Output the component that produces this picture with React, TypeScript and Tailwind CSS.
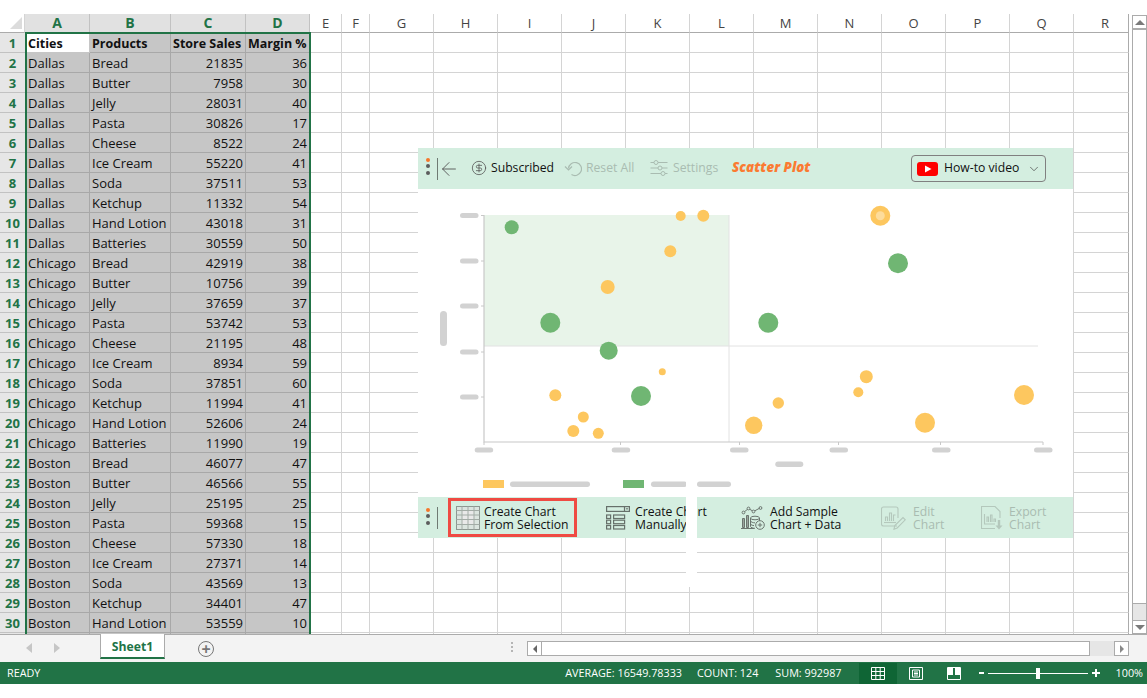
import React from 'react';
import { ArrowLeft, CircleDollarSign, ChevronDown } from 'lucide-react';

const COLUMNS = ['A', 'B', 'C', 'D', 'E', 'F', 'G', 'H', 'I', 'J', 'K', 'L', 'M', 'N', 'O', 'P', 'Q', 'R'];

const RAW = `Dallas,Bread,21835,36
Dallas,Butter,7958,30
Dallas,Jelly,28031,40
Dallas,Pasta,30826,17
Dallas,Cheese,8522,24
Dallas,Ice Cream,55220,41
Dallas,Soda,37511,53
Dallas,Ketchup,11332,54
Dallas,Hand Lotion,43018,31
Dallas,Batteries,30559,50
Chicago,Bread,42919,38
Chicago,Butter,10756,39
Chicago,Jelly,37659,37
Chicago,Pasta,53742,53
Chicago,Cheese,21195,48
Chicago,Ice Cream,8934,59
Chicago,Soda,37851,60
Chicago,Ketchup,11994,41
Chicago,Hand Lotion,52606,24
Chicago,Batteries,11990,19
Boston,Bread,46077,47
Boston,Butter,46566,55
Boston,Jelly,25195,25
Boston,Pasta,59368,15
Boston,Cheese,57330,18
Boston,Ice Cream,27371,14
Boston,Soda,43569,13
Boston,Ketchup,34401,47
Boston,Hand Lotion,53559,10`;

const ROWS = [['Cities', 'Products', 'Store Sales', 'Margin %'], ...RAW.split('\n').map((l) => l.split(',')), ['', '', '', '']];

const YELLOW = '#fdc75f';
const GREEN = '#70b673';

const BUBBLES: [number, number, number, string][] = [
  [680.7, 216, 5, YELLOW],
  [703.3, 215.7, 6, YELLOW],
  [670.3, 251.3, 6, YELLOW],
  [607.7, 287, 7, YELLOW],
  [662.3, 371.7, 3.5, YELLOW],
  [555.3, 395.3, 6, YELLOW],
  [583.3, 417, 5.5, YELLOW],
  [573.3, 431, 6, YELLOW],
  [598.3, 433.3, 5.5, YELLOW],
  [866.3, 376.7, 6.5, YELLOW],
  [858.3, 392.3, 5, YELLOW],
  [778.3, 403, 5.7, YELLOW],
  [753.7, 425.3, 8.7, YELLOW],
  [925, 422.7, 10, YELLOW],
  [1024, 395, 10, YELLOW],
  [880.3, 215.7, 10, YELLOW],
  [511.7, 227.3, 7, GREEN],
  [550.3, 322.7, 10, GREEN],
  [608.7, 350.7, 9, GREEN],
  [641, 396, 10, GREEN],
  [898, 263.3, 10, GREEN],
  [768.3, 322.7, 10, GREEN],
];

const Chart = () => (
  <svg className="block" width={655} height={308} viewBox="418 189 655 308">
    <rect x={484} y={215} width={245} height={131} fill="#e8f4e9" />
    <path d="M484 346H1038M729 215V442" stroke="#e2e2e2" strokeWidth={1} fill="none" />
    <path d="M484 215V442H1043" stroke="#c8c8c8" strokeWidth={1.2} fill="none" />
    <path d="M484 442v3M620.5 442v3M739.5 442v3M838.5 442v3M940.5 442v3M1043 442v3M481 215.5h3M481 261h3M481 306h3M481 352h3M481 397h3" stroke="#c8c8c8" strokeWidth={1} fill="none" />
    {[215.5, 261, 306, 352, 397].map((y) => (
      <rect key={y} x={460} y={y - 2.5} width={18.5} height={5} rx={2.5} fill="#d2d2d2" />
    ))}
    <rect x={440} y={311} width={7} height={35} rx={3.5} fill="#d2d2d2" />
    {[474.7, 611.7, 730, 829.5, 932, 1034].map((x) => (
      <rect key={x} x={x} y={447.5} width={18.5} height={5} rx={2.5} fill="#d2d2d2" />
    ))}
    <rect x={775.3} y={461.5} width={28} height={5.5} rx={2.7} fill="#d2d2d2" />
    <rect x={483} y={480} width={21} height={8} fill={YELLOW} />
    <rect x={510} y={481.5} width={80} height={5.5} rx={2.7} fill="#d2d2d2" />
    <rect x={623} y={480} width={21} height={8} fill={GREEN} />
    <rect x={651} y={481.5} width={36} height={5.5} rx={2.7} fill="#d2d2d2" />
    <rect x={697} y={481.5} width={34} height={5.5} rx={2.7} fill="#d2d2d2" />
    {BUBBLES.map(([x, y, r, c]) => (
      <circle key={`${x}-${y}`} cx={x} cy={y} r={r} fill={c} />
    ))}
    <circle cx={880.3} cy={215.7} r={4.5} fill="#fddc9b" />
  </svg>
);

const Dots = ({ lift }: { lift: string }) => (
  <div className={`flex flex-col gap-[2.5px] ml-[8px] w-[4px] shrink-0 ${lift}`}>
    <div className="w-[4px] h-[4px] rounded-full bg-[#f5762a]" />
    <div className="w-[4px] h-[4px] rounded-full bg-[#5c5c5c]" />
    <div className="w-[4px] h-[4px] rounded-full bg-[#5c5c5c]" />
  </div>
);

const Separator = () => <div className="w-px h-[22px] bg-[#6f7a73] ml-[7px] shrink-0" />;

const ResetIcon = () => (
  <svg width={18} height={18} viewBox="0 0 18 18" fill="none" stroke="#a9bcb1" strokeWidth={1.2}>
    <path d="M4.5 9.5a6.5 6.5 0 1 1 3 6" />
    <path d="M1 7.5L4.5 11L8 7.5" />
  </svg>
);

const SettingsIcon = () => (
  <svg width={18} height={16} viewBox="0 0 18 16" fill="none" stroke="#a9bcb1" strokeWidth={1}>
    <path d="M0.5 2.5H4M8 2.5H17.5M0.5 8H8M12 8H17.5M0.5 13.5H11M15 13.5H17.5" />
    <circle cx={6} cy={2.5} r={2} />
    <circle cx={10} cy={8} r={2} />
    <circle cx={13} cy={13.5} r={2} />
  </svg>
);

const YouTubeIcon = () => (
  <svg width={21} height={14} viewBox="0 0 21 14" className="shrink-0">
    <rect width={21} height={14} rx={3} fill="#ff0000" />
    <path d="M8 3.5L14.5 7L8 10.5Z" fill="#ffffff" />
  </svg>
);

const TableIcon = () => (
  <svg width={24} height={24} viewBox="0 0 24 24" fill="none">
    <rect x={0.5} y={0.5} width={23} height={23} fill="#dbe5df" stroke="#8d9791" />
    <rect x={6} y={4} width={12} height={15} fill="#e9e9e9" />
    <path d="M0.5 4.5H23.5M0.5 9H23.5M0.5 13.5H23.5M0.5 18.5H23.5M6 0.5V23.5M12 0.5V23.5M18 0.5V23.5" stroke="#a3aca6" strokeWidth={1} />
  </svg>
);

const ManualIcon = () => (
  <svg width={24} height={24} viewBox="0 0 24 24" fill="none" stroke="#66706a" strokeWidth={1.2}>
    <rect x={0.6} y={0.6} width={22.8} height={4.8} />
    <path d="M18.5 0.6V5.4" />
    <path d="M19.7 2.3h2.6l-1.3 1.6z" fill="#66706a" stroke="none" />
    <rect x={0.6} y={9} width={4} height={3.5} />
    <rect x={7.6} y={9} width={11} height={3.5} />
    <rect x={0.6} y={14.2} width={4} height={3.5} />
    <rect x={7.6} y={14.2} width={11} height={3.5} />
    <rect x={0.6} y={19.5} width={4} height={3.5} />
    <rect x={7.6} y={19.5} width={11} height={3.5} />
  </svg>
);

const SampleIcon = () => (
  <svg width={24} height={24} viewBox="0 0 24 24" fill="none" stroke="#6b756f" strokeWidth={1}>
    <path d="M2.5 6.5L7.5 2.5L12.5 5.5L19 2" />
    <circle cx={2.5} cy={6.5} r={1.4} fill="#d4eee0" />
    <circle cx={7.5} cy={2.5} r={1.4} fill="#d4eee0" />
    <circle cx={12.5} cy={5.5} r={1.4} fill="#d4eee0" />
    <circle cx={19.5} cy={2} r={1.4} fill="#d4eee0" />
    <path d="M1.5 12.5V21.5H3.5V12.5ZM5.5 9.5V21.5H7.5V9.5Z" fill="#9aa39d" />
    <path d="M0 22.5H13" />
    <ellipse cx={14} cy={12} rx={4.5} ry={1.8} />
    <path d="M9.5 12V20.5C9.5 21.5 12 22.3 14 22.3M18.5 12V15M9.5 15C10 16.2 12 16.8 14 16.8M9.5 18C10 19 11.5 19.5 13 19.6" />
    <circle cx={19} cy={19} r={4.3} fill="#d4eee0" />
    <path d="M19 16.8V21.2M16.8 19H21.2" />
  </svg>
);

const EditIcon = () => (
  <svg width={25} height={24} viewBox="0 0 25 24" fill="none" stroke="#b4c8bc" strokeWidth={1.1}>
    <path d="M16 20H2.5Q0.5 20 0.5 18V3Q0.5 1 2.5 1H15Q17 1 17 3V12" />
    <path d="M4.5 15V11H6.5V15M8.5 15V7H10.5V15M12.5 15V9H14.5" />
    <path d="M3 16.5H15" />
    <path d="M13 23.2L13.8 19.5L22 11.5L24.3 13.8L16.2 22Z" />
  </svg>
);

const ExportIcon = () => (
  <svg width={22} height={24} viewBox="0 0 22 24" fill="none" stroke="#b4c8bc" strokeWidth={1.1}>
    <path d="M14 22.5H0.5V0.5H14L19 5.5V12" />
    <path d="M3.5 8V18H14" />
    <path d="M6 16V11H7.5V16M9.5 16V9H11V16M13 16V13H14.5V16" />
    <path d="M18 14V21" strokeWidth={2.4} />
    <path d="M14.5 19.5H21.5L18 23.5Z" fill="#b4c8bc" stroke="none" />
  </svg>
);

const TopBar = () => (
  <div className="flex items-center h-[41px] bg-[#d4eee0] text-[12.2px] whitespace-nowrap">
    <Dots lift="mb-[5px]" />
    <Separator />
    <div className="w-[33px] shrink-0">
      <ArrowLeft size={22} strokeWidth={1} className="text-[#555555]" />
    </div>
    <div className="w-[93px] flex items-center gap-[4px] shrink-0 text-[#111111]">
      <CircleDollarSign size={16} strokeWidth={1.2} className="text-[#555555]" />
      <span>Subscribed</span>
    </div>
    <div className="w-[86px] flex items-center gap-[4px] shrink-0 text-[#a9bcb1]">
      <ResetIcon />
      <span>Reset All</span>
    </div>
    <div className="w-[82px] flex items-center gap-[5px] shrink-0 text-[#a9bcb1]">
      <SettingsIcon />
      <span>Settings</span>
    </div>
    <span className="text-[13.4px] font-extrabold italic text-[#fb7a31] mb-[2px]">Scatter Plot</span>
    <div className="ml-auto mr-[27px] w-[135px] h-[27px] flex items-center pl-[5px] pr-[4px] gap-[6px] border border-[#808080] rounded-[4px] text-[#111111]">
      <YouTubeIcon />
      <span>How-to video</span>
      <ChevronDown size={14} strokeWidth={1.2} className="ml-auto text-[#444444]" />
    </div>
  </div>
);

const ToolItem = ({ icon, first, second, muted, width, gap }: { icon: React.ReactNode; first: string; second: string; muted?: boolean; width: string; gap: string }) => (
  <div className={`flex items-center shrink-0 ${width} ${gap} ${muted ? 'text-[#a9bcb1]' : 'text-[#111111]'}`}>
    {icon}
    <div className="leading-[13px]">
      <div>{first}</div>
      <div>{second}</div>
    </div>
  </div>
);

const BottomBar = () => (
  <div className="flex items-center h-[41px] bg-[#d4eee0] text-[12.2px] whitespace-nowrap">
    <Dots lift="mb-[3px]" />
    <Separator />
    <div className="ml-[10px] w-[129px] h-[39px] border-[3px] border-[#ef4a43] flex items-center pl-[5px] gap-[4px] shrink-0 text-[#111111]">
      <TableIcon />
      <div className="leading-[13px]">
        <div>Create Chart</div>
        <div>From Selection</div>
      </div>
    </div>
    <div className="w-[29px] shrink-0" />
    <ToolItem width="w-[135px]" gap="gap-[5px]" icon={<ManualIcon />} first="Create Chart" second="Manually" />
    <ToolItem width="w-[140px]" gap="gap-[5px]" icon={<SampleIcon />} first="Add Sample" second="Chart + Data" />
    <ToolItem width="w-[100px]" gap="gap-[7px]" icon={<EditIcon />} first="Edit" second="Chart" muted />
    <ToolItem width="w-[70px]" gap="gap-[6px]" icon={<ExportIcon />} first="Export" second="Chart" muted />
  </div>
);

const Sheet = () => (
  <div className="relative w-[1129px] shrink-0 h-[620px] overflow-hidden">
    <div className="grid grid-cols-[25px_65px_81px_75px_64px_32px_28px_repeat(11,64px)_55px] grid-rows-[19px] auto-rows-[20px] leading-[20px]">
      <div className="border-b border-b-[#ababab] border-r border-r-[#d4d4d4] relative">
        <div className="absolute left-[10px] top-[3px] w-0 h-0 border-l-[12px] border-l-transparent border-b-[12px] border-b-[#dcdcdc]" />
      </div>
      {COLUMNS.map((c, i) => (
        <div
          key={c}
          className={
            i < 4
              ? 'text-center text-[14px] leading-[18px] font-bold text-[#217346] bg-[#e1e1e1] border-r border-r-[#c2c2c2] border-b border-b-[#ababab]'
              : i === 17
                ? 'text-left pl-[27px] text-[13px] leading-[18px] text-[#444444] border-r border-r-[#ababab] border-b border-b-[#ababab]'
                : 'text-center text-[13px] leading-[18px] text-[#444444] border-r border-r-[#d4d4d4] border-b border-b-[#ababab]'
          }
        >
          {c}
        </div>
      ))}
      {ROWS.map((row, r) => (
        <React.Fragment key={r}>
          <div className="bg-[#e6e6e6] text-center text-[13px] font-bold text-[#217346] border-b border-b-[#c2c2c2]">{r < 30 ? r + 1 : ''}</div>
          {COLUMNS.map((c, i) => (
            <div
              key={c}
              className={`whitespace-nowrap overflow-hidden border-r border-b text-[#111111] ${
                i === 17
                  ? 'border-b-[#d4d4d4] border-r-[#ababab]'
                  : i >= 4
                    ? 'border-[#d4d4d4]'
                    : r === 0 && i === 0
                      ? 'bg-white border-[#c6c6c6]'
                      : 'bg-[#c6c6c6] border-[#a8a8a8]'
              } ${r === 0 ? (i === 0 ? 'font-bold text-[12.5px] leading-[21px] pl-[3px]' : 'font-bold text-[12.5px] leading-[21px] pl-[2px]') : i === 2 || i === 3 ? 'text-right pr-[2px]' : i === 1 ? 'pl-[2px]' : 'pl-[3px]'}`}
            >
              {i < 4 ? row[i] : ''}
            </div>
          ))}
        </React.Fragment>
      ))}
    </div>
    <div className="absolute left-[25px] top-[18px] w-[286px] h-[620px] border-2 border-[#217346] pointer-events-none" />
  </div>
);

const VerticalScroll = () => (
  <div className="w-[18px] shrink-0 h-[620px] pl-[3px] pt-px flex flex-col">
    <div className="h-[15px] border border-[#ababab] border-b-2 flex items-center justify-center">
      <div className="w-0 h-0 border-l-[5px] border-r-[5px] border-b-[5px] border-l-transparent border-r-transparent border-b-[#7a7a7a]" />
    </div>
    <div className="flex-1 border-x border-[#ababab] border-b bg-white" />
    <div className="h-[16px] border-x border-[#ababab] bg-[#e6e6e6]" />
    <div className="h-[14px] border border-[#ababab] flex items-center justify-center">
      <div className="w-0 h-0 border-l-[5px] border-r-[5px] border-t-[5px] border-l-transparent border-r-transparent border-t-[#7a7a7a]" />
    </div>
  </div>
);

const TabBar = () => (
  <div className="h-[28px] bg-[#f3f3f3] border-t border-[#ababab] flex items-start relative">
    <div className="w-[26px] shrink-0" />
    <div className="mt-[8px] w-0 h-0 border-t-[5px] border-b-[5px] border-r-[6px] border-t-transparent border-b-transparent border-r-[#c6c6c6]" />
    <div className="w-[22px] shrink-0" />
    <div className="mt-[8px] w-0 h-0 border-t-[5px] border-b-[5px] border-l-[6px] border-t-transparent border-b-transparent border-l-[#c6c6c6]" />
    <div className="w-[40px] shrink-0" />
    <div className="w-[65px] h-[25px] -mt-px bg-white border-x border-[#ababab] border-b-2 border-b-[#217346] text-center text-[12.2px] leading-[25px] font-bold text-[#217346] shrink-0">Sheet1</div>
    <div className="ml-[33px] mt-[6px] w-[16px] h-[16px] rounded-full border border-[#777777] shrink-0 flex items-center justify-center text-[16px] leading-none font-bold text-[#777777]">+</div>
    <div className="ml-[297px] mt-[7px] flex flex-col gap-[2px] w-[2px] shrink-0">
      <div className="h-[2px] bg-[#b5b5b5]" />
      <div className="h-[2px] bg-[#b5b5b5]" />
      <div className="h-[2px] bg-[#b5b5b5]" />
    </div>
    <div className="ml-[14px] mt-[6px] w-[602px] h-[15px] flex shrink-0">
      <div className="w-[15px] border border-[#ababab] bg-white flex items-center justify-center">
        <div className="w-0 h-0 border-t-[4px] border-b-[4px] border-r-[4px] border-t-transparent border-b-transparent border-r-[#666666]" />
      </div>
      <div className="w-[548px] border-y border-r border-[#ababab] bg-white" />
      <div className="flex-1 bg-[#e6e6e6]" />
      <div className="w-[15px] border border-[#ababab] bg-white flex items-center justify-center">
        <div className="w-0 h-0 border-t-[4px] border-b-[4px] border-l-[4px] border-t-transparent border-b-transparent border-l-[#888888]" />
      </div>
    </div>
  </div>
);

const StatusBar = () => (
  <div className="h-[22px] bg-[#217346] text-white text-[10.8px] flex items-center">
    <span className="pl-[7px]">READY</span>
    <span className="ml-auto">AVERAGE: 16549.78333</span>
    <span className="ml-[15px]">COUNT: 124</span>
    <span className="ml-[17px]">SUM: 992987</span>
    <div className="ml-[17px] w-[38px] h-[21px] mt-px bg-[#0f6535] flex items-center justify-center shrink-0">
      <svg width={14} height={13} viewBox="0 0 14 13" fill="none" stroke="#ffffff" strokeWidth={1}>
        <path d="M0.5 0.5H13.5V12.5H0.5ZM0.5 4.5H13.5M0.5 8.5H13.5M4.8 0.5V12.5M9.2 0.5V12.5" />
      </svg>
    </div>
    <div className="w-[38px] flex justify-center shrink-0">
      <svg width={14} height={13} viewBox="0 0 14 13" fill="none" stroke="#ffffff" strokeWidth={1}>
        <path d="M0.5 0.5H13.5V12.5H0.5ZM3.5 3H10.5V10H3.5ZM5 5H9M5 6.5H9M5 8H9" />
      </svg>
    </div>
    <div className="w-[38px] flex justify-center shrink-0">
      <svg width={14} height={13} viewBox="0 0 14 13" fill="none" stroke="#ffffff" strokeWidth={1}>
        <path d="M0.5 0.5H13.5V12.5H0.5Z" />
        <path d="M1 1H6V8H1ZM8 1H13V8H8Z" fill="#ffffff" stroke="none" />
      </svg>
    </div>
    <div className="ml-[6px] w-[5px] h-[2px] bg-white shrink-0" />
    <div className="ml-[4px] w-[100px] h-px bg-white relative shrink-0">
      <div className="absolute left-[48px] -top-[5px] w-[4px] h-[11px] bg-white" />
    </div>
    <div className="ml-[4px] w-[8px] h-[8px] relative shrink-0">
      <div className="absolute left-0 top-[3px] w-[8px] h-[2px] bg-white" />
      <div className="absolute left-[3px] top-0 w-[2px] h-[8px] bg-white" />
    </div>
    <span className="ml-[16px] mr-[4px]">100%</span>
  </div>
);

export default function App() {
  return (
    <div className="relative w-[1147px] h-[698px] overflow-hidden bg-white text-[13px] font-['Open_Sans',sans-serif]">
      <div className="h-[14px]" />
      <div className="flex">
        <Sheet />
        <VerticalScroll />
      </div>
      <TabBar />
      <StatusBar />

      <div className="absolute left-[418px] top-[148px] w-[655px]">
        <TopBar />
        <div className="bg-white">
          <Chart />
        </div>
        <BottomBar />
      </div>
      <div className="absolute left-[686px] top-[478px] w-[11px] h-[109px] bg-white" />
    </div>
  );
}
